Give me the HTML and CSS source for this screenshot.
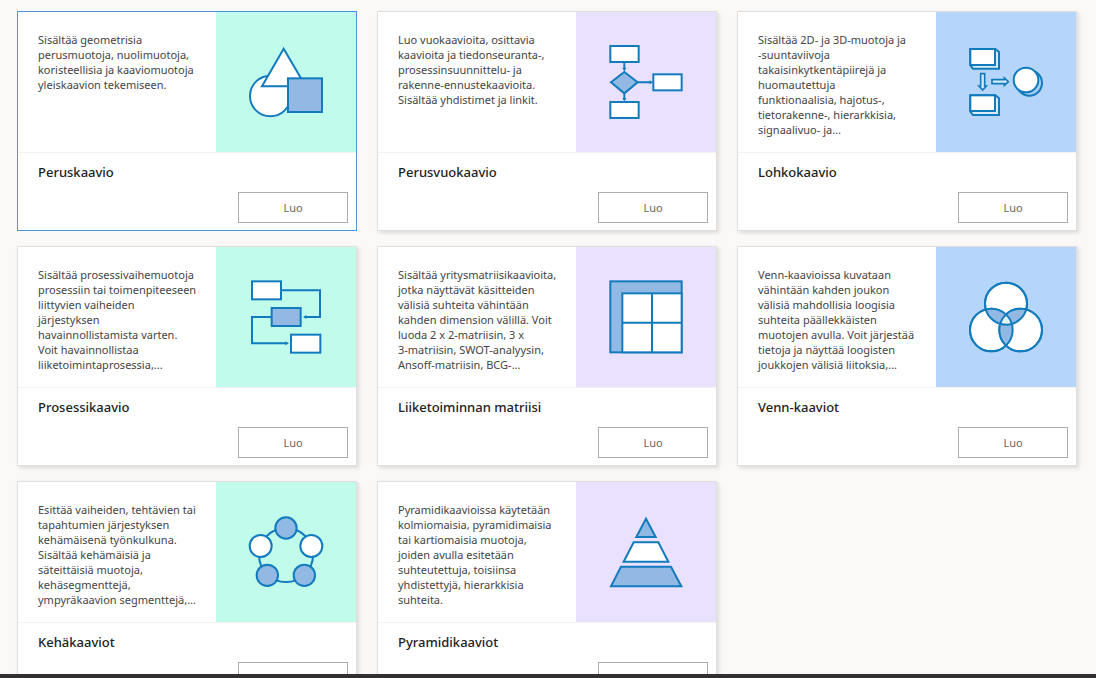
FILE: index.html
```
<!DOCTYPE html>
<html lang="fi">
<head>
<meta charset="utf-8">
<meta name="viewport" content="width=device-width, initial-scale=1">
<title>Kaaviomallit</title>
<link rel="stylesheet" href="styles.css">
</head>
<body>
<main class="gallery">
  <article class="card card-selected">
    <div class="card-top">
      <p class="description">Sisältää geometrisia<br>perusmuotoja, nuolimuotoja,<br>koristeellisia ja kaaviomuotoja<br>yleiskaavion tekemiseen.</p>
      <div class="art art-green">
        <svg class="icon" viewBox="-72 -84 420 420" aria-hidden="true">
          <circle class="white" cx="91" cy="168" r="61"/>
          <path class="white" d="M131 26 L66 139 H197 Z"/>
          <rect class="blue" x="144" y="115" width="102" height="101"/>
        </svg>
      </div>
    </div>
    <div class="card-bottom">
      <h2 class="title">Peruskaavio</h2>
      <button class="create" type="button">Luo</button>
    </div>
  </article>

  <article class="card">
    <div class="card-top">
      <p class="description">Luo vuokaavioita, osittavia<br>kaavioita ja tiedonseuranta-,<br>prosessinsuunnittelu- ja<br>rakenne-ennustekaavioita.<br>Sisältää yhdistimet ja linkit.</p>
      <div class="art art-purple">
        <svg class="icon" viewBox="-72 -84 420 420" aria-hidden="true">
          <path class="line" d="M73 66 V88 M113 127 H154 M73 160 V180"/>
          <path class="tip" d="M67 84 H79 L73 94 Z M149 121 V133 L159 127 Z M67 174 H79 L73 184 Z"/>
          <rect class="white" x="31" y="18" width="85" height="48"/>
          <rect class="white" x="160" y="103" width="85" height="48"/>
          <rect class="white" x="31" y="186" width="85" height="48"/>
          <path class="blue" d="M73 96 L113 127 L73 160 L33 127 Z"/>
        </svg>
      </div>
    </div>
    <div class="card-bottom">
      <h2 class="title">Perusvuokaavio</h2>
      <button class="create" type="button">Luo</button>
    </div>
  </article>

  <article class="card">
    <div class="card-top">
      <p class="description">Sisältää 2D- ja 3D-muotoja ja<br>-suuntaviivoja<br>takaisinkytkentäpiirejä ja<br>huomautettuja<br>funktionaalisia, hajotus-,<br>tietorakenne-, hierarkkisia,<br>signaalivuo- ja...</p>
      <div class="art art-blue">
        <svg class="icon" viewBox="-72 -84 420 420" aria-hidden="true">
          <path class="pale" d="M31 27 H106 L117 36 V86 H39 L31 76 Z"/>
          <rect class="white" x="31" y="27" width="74" height="48"/>
          <path class="pale" d="M31 166 H106 L117 175 V225 H39 L31 215 Z"/>
          <rect class="white" x="31" y="166" width="74" height="47"/>
          <path class="pale thin" d="M62 101 H74 V138 H79 L68 150 L57 138 H62 Z"/>
          <path class="pale thin" d="M96 119 H133 V114 L145 125 L133 136 V131 H96 Z"/>
          <circle class="soft" cx="208" cy="129" r="38"/>
          <circle class="white" cx="198" cy="120" r="37"/>
        </svg>
      </div>
    </div>
    <div class="card-bottom">
      <h2 class="title">Lohkokaavio</h2>
      <button class="create" type="button">Luo</button>
    </div>
  </article>

  <article class="card">
    <div class="card-top">
      <p class="description">Sisältää prosessivaihemuotoja<br>prosessiin tai toimenpiteeseen<br>liittyvien vaiheiden<br>järjestyksen<br>havainnollistamista varten.<br>Voit havainnollistaa<br>liiketoimintaprosessia,...</p>
      <div class="art art-green">
        <svg class="icon" viewBox="-72 -69 420 420" aria-hidden="true">
          <path class="line" d="M123 61 H240 V141 H196 M94 141 H36 V220 H140"/>
          <path class="tip" d="M199 135 V147 L189 141 Z M136 214 V226 L147 220 Z"/>
          <rect class="white" x="36" y="34" width="87" height="54"/>
          <rect class="blue" x="95" y="114" width="87" height="54"/>
          <rect class="white" x="153" y="194" width="88" height="54"/>
        </svg>
      </div>
    </div>
    <div class="card-bottom">
      <h2 class="title">Prosessikaavio</h2>
      <button class="create" type="button">Luo</button>
    </div>
  </article>

  <article class="card">
    <div class="card-top">
      <p class="description">Sisältää yritysmatriisikaavioita,<br>jotka näyttävät käsitteiden<br>välisiä suhteita vähintään<br>kahden dimension välillä. Voit<br>luoda 2 x 2-matriisin, 3 x<br>3-matriisin, SWOT-analyysin,<br>Ansoff-matriisin, BCG-...</p>
      <div class="art art-purple">
        <svg class="icon" viewBox="-72 -69 420 420" aria-hidden="true">
          <rect class="blue" x="31" y="34" width="214" height="213"/>
          <rect class="white" x="67" y="70" width="178" height="177"/>
          <path class="line" d="M156 70 V247 M67 158 H245"/>
        </svg>
      </div>
    </div>
    <div class="card-bottom">
      <h2 class="title">Liiketoiminnan matriisi</h2>
      <button class="create" type="button">Luo</button>
    </div>
  </article>

  <article class="card">
    <div class="card-top">
      <p class="description">Venn-kaavioissa kuvataan<br>vähintään kahden joukon<br>välisiä mahdollisia loogisia<br>suhteita päällekkäisten<br>muotojen avulla. Voit järjestää<br>tietoja ja näyttää loogisten<br>joukkojen välisiä liitoksia,...</p>
      <div class="art art-blue">
        <svg class="icon" viewBox="-72 -69 420 420" aria-hidden="true">
          <defs>
            <clipPath id="venn-top"><circle cx="138" cy="101" r="63"/></clipPath>
            <clipPath id="venn-left"><circle cx="94" cy="180" r="64"/></clipPath>
          </defs>
          <circle class="white" cx="138" cy="101" r="63"/>
          <circle class="white" cx="94" cy="180" r="64"/>
          <circle class="white" cx="182" cy="180" r="64"/>
          <g clip-path="url(#venn-top)">
            <circle class="fill-blue" cx="94" cy="180" r="64"/>
            <circle class="fill-blue" cx="182" cy="180" r="64"/>
          </g>
          <g clip-path="url(#venn-left)">
            <circle class="fill-blue" cx="182" cy="180" r="64"/>
            <g clip-path="url(#venn-top)"><circle class="fill-pale" cx="182" cy="180" r="64"/></g>
          </g>
          <circle class="line" cx="138" cy="101" r="63"/>
          <circle class="line" cx="94" cy="180" r="64"/>
          <circle class="line" cx="182" cy="180" r="64"/>
        </svg>
      </div>
    </div>
    <div class="card-bottom">
      <h2 class="title">Venn-kaaviot</h2>
      <button class="create" type="button">Luo</button>
    </div>
  </article>

  <article class="card">
    <div class="card-top">
      <p class="description">Esittää vaiheiden, tehtävien tai<br>tapahtumien järjestyksen<br>kehämäisenä työnkulkuna.<br>Sisältää kehämäisiä ja<br>säteittäisiä muotoja,<br>kehäsegmenttejä,<br>ympyräkaavion segmenttejä,...</p>
      <div class="art art-green">
        <svg class="icon" viewBox="-72 -84 420 420" aria-hidden="true">
          <circle class="line" cx="138" cy="135" r="81"/>
          <circle class="blue" cx="138" cy="54" r="32"/>
          <circle class="white" cx="62" cy="108" r="33"/>
          <circle class="white" cx="214" cy="108" r="33"/>
          <circle class="blue" cx="82" cy="196" r="32"/>
          <circle class="blue" cx="193" cy="196" r="32"/>
        </svg>
      </div>
    </div>
    <div class="card-bottom">
      <h2 class="title">Kehäkaaviot</h2>
      <button class="create" type="button">Luo</button>
    </div>
  </article>

  <article class="card">
    <div class="card-top">
      <p class="description">Pyramidikaavioissa käytetään<br>kolmiomaisia, pyramidimaisia<br>tai kartiomaisia muotoja,<br>joiden avulla esitetään<br>suhteutettuja, toisiinsa<br>yhdistettyjä, hierarkkisia<br>suhteita.</p>
      <div class="art art-purple">
        <svg class="icon" viewBox="-72 -84 420 420" aria-hidden="true">
          <path class="blue" d="M138 26 L167 81 H109 Z"/>
          <path class="white" d="M101 97 H175 L205 155 H71 Z"/>
          <path class="blue" d="M63 170 H213 L244 229 H33 Z"/>
        </svg>
      </div>
    </div>
    <div class="card-bottom">
      <h2 class="title">Pyramidikaaviot</h2>
      <button class="create" type="button">Luo</button>
    </div>
  </article>
</main>
<footer class="edge"></footer>
</body>
</html>
```
FILE: styles.css
```
* {
  box-sizing: border-box;
}

body {
  display: flex;
  flex-direction: column;
  height: 100vh;
  margin: 0;
  background: #faf9f8;
  color: #444;
  font-family: "Noto Sans", "Open Sans", sans-serif;
}

.gallery {
  display: grid;
  grid-template-columns: repeat(auto-fill, 340px);
  align-content: start;
  gap: 15px 20px;
  flex: 1;
  min-height: 0;
  padding: 11px 17px;
  overflow: hidden;
}

.card {
  border: 1px solid #e1dfdd;
  background: #fff;
  box-shadow: 2px 2px 4px rgba(0, 0, 0, 0.12);
}

.card-selected {
  border-color: #4a93e0;
  box-shadow: none;
}

.card-top {
  display: flex;
  justify-content: space-between;
  border-bottom: 1px solid #f3f2f1;
}

.description {
  margin: 0;
  padding: 20px 0 0 20px;
  font-size: 11px;
  line-height: 15px;
  white-space: nowrap;
}

.art {
  flex: none;
  width: 140px;
  height: 140px;
}

.art-green {
  background: #c0fbec;
}

.art-purple {
  background: #e9e1fd;
}

.art-blue {
  background: #b5d6fa;
}

.icon {
  display: block;
  width: 100%;
  height: 100%;
  stroke: #127bbd;
  stroke-width: 6;
}

.white {
  fill: #fff;
}

.blue {
  fill: #91b9e3;
}

.pale {
  fill: #d9ecf5;
}

.soft {
  fill: #a9cdf3;
}

.thin {
  stroke-width: 5;
}

.line {
  fill: none;
}

.tip {
  fill: #127bbd;
  stroke: none;
}

.fill-blue {
  fill: #91b9e3;
  stroke: none;
}

.fill-pale {
  fill: #e2f3f3;
  stroke: none;
}

.card-bottom {
  display: flex;
  flex-direction: column;
  gap: 10px;
  padding: 9px 8px 7px 20px;
}

.title {
  margin: 0;
  color: #222;
  font-size: 13px;
  font-weight: 500;
  line-height: 20px;
}

.create {
  align-self: flex-end;
  width: 110px;
  height: 31px;
  padding: 0;
  border: 1px solid #ababab;
  background: #fff;
  color: #666;
  font-family: inherit;
  font-size: 11px;
}

.edge {
  flex: none;
  height: 4px;
  background: #323031;
}
```
